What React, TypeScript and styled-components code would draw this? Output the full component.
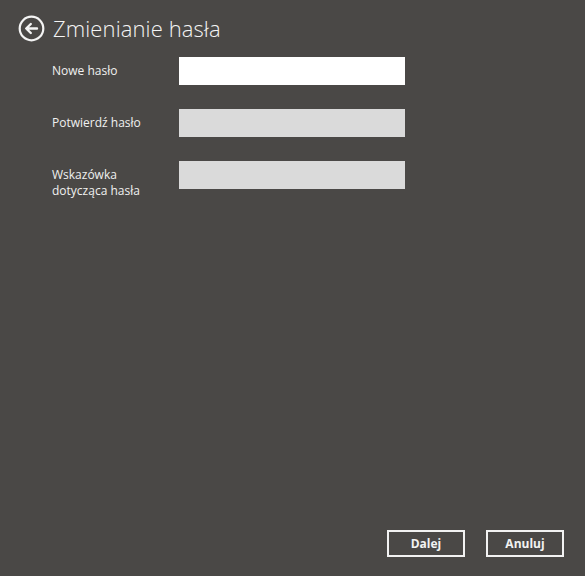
import React from 'react';
import styled, { createGlobalStyle } from 'styled-components';

const GlobalStyle = createGlobalStyle`
  html, body {
    margin: 0;
    padding: 0;
    background: #4a4846;
  }
`;

const Page = styled.div`
  width: 585px;
  height: 576px;
  box-sizing: border-box;
  background: #4a4846;
  color: #ffffff;
  font-family: "Open Sans", "Noto Sans", sans-serif;
  display: flex;
  flex-direction: column;
  padding: 14px 21px 19px 18px;
`;

const Header = styled.header`
  display: flex;
  align-items: center;
  gap: 8px;
  height: 28px;
`;

const BackButton = styled.button`
  width: 27px;
  height: 27px;
  padding: 0;
  border: none;
  background: none;
  display: flex;
  cursor: pointer;
`;

const Title = styled.h1`
  margin: 0;
  font-size: 22px;
  font-weight: 300;
  letter-spacing: 0.1px;
  color: #f4f4f4;
`;

const Form = styled.div`
  display: flex;
  flex-direction: column;
  gap: 24px;
  margin-top: 15px;
  padding-left: 34px;
`;

const Row = styled.div`
  display: flex;
  align-items: flex-start;
`;

const Label = styled.label`
  width: 127px;
  font-size: 12px;
  line-height: 16px;
  padding-top: 6px;
  color: #f0f0f0;
`;

const Input = styled.input<{ $active?: boolean }>`
  width: 226px;
  height: 28px;
  box-sizing: border-box;
  border: none;
  outline: none;
  background: ${(p) => (p.$active ? '#ffffff' : '#dadada')};
`;

const Spacer = styled.div`
  flex: 1;
`;

const Actions = styled.div`
  display: flex;
  justify-content: flex-end;
  gap: 21px;
`;

const ActionButton = styled.button`
  width: 78px;
  height: 27px;
  box-sizing: border-box;
  border: 2px solid #f2f2f2;
  background: transparent;
  color: #f2f2f2;
  font-family: "Open Sans", "Noto Sans", sans-serif;
  font-size: 12px;
  font-weight: 700;
  padding: 0;
`;

function BackIcon() {
  return (
    <svg width="27" height="27" viewBox="0 0 27 27">
      <circle cx="13.5" cy="13.5" r="11.8" fill="none" stroke="#f4f4f4" strokeWidth="2.2" />
      <path
        d="M19 13.5 H8.5 M12.8 9 L8.2 13.5 L12.8 18"
        fill="none"
        stroke="#f4f4f4"
        strokeWidth="2.4"
        strokeLinecap="round"
        strokeLinejoin="round"
      />
    </svg>
  );
}

export default function App() {
  return (
    <>
      <GlobalStyle />
      <Page>
        <Header>
          <BackButton aria-label="Wstecz">
            <BackIcon />
          </BackButton>
          <Title>Zmienianie hasła</Title>
        </Header>

        <Form>
          <Row>
            <Label htmlFor="new">Nowe hasło</Label>
            <Input id="new" type="password" $active />
          </Row>
          <Row>
            <Label htmlFor="confirm">Potwierdź hasło</Label>
            <Input id="confirm" type="password" />
          </Row>
          <Row>
            <Label htmlFor="hint">
              Wskazówka
              <br />
              dotycząca hasła
            </Label>
            <Input id="hint" type="text" />
          </Row>
        </Form>

        <Spacer />

        <Actions>
          <ActionButton>Dalej</ActionButton>
          <ActionButton>Anuluj</ActionButton>
        </Actions>
      </Page>
    </>
  );
}
